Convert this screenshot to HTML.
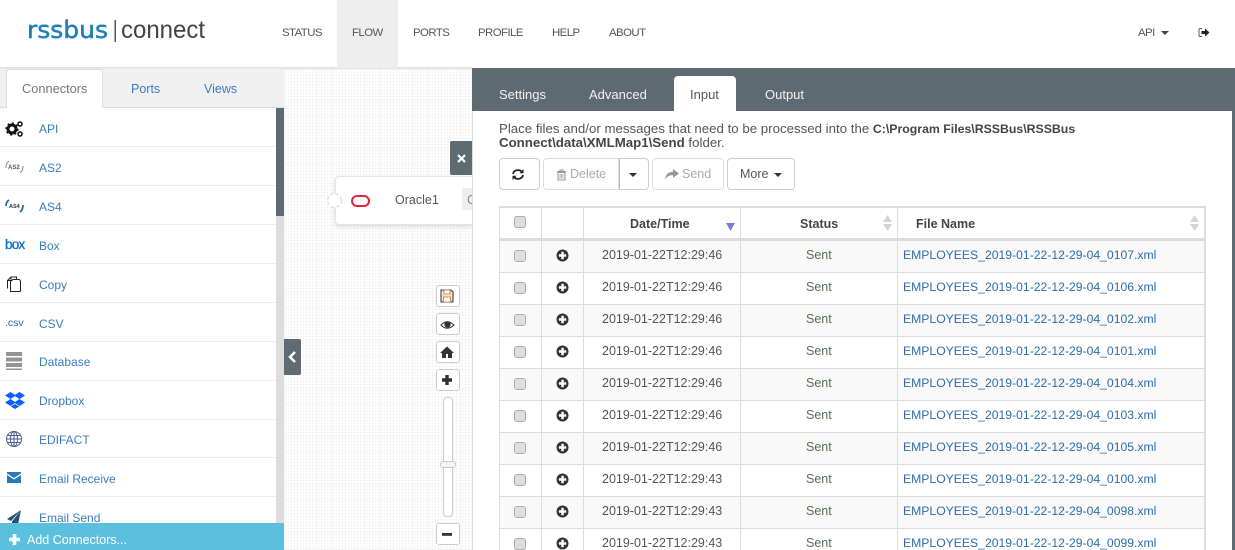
<!DOCTYPE html>
<html><head><meta charset="utf-8"><style>
*{box-sizing:border-box}
html,body{margin:0;padding:0;width:1235px;height:550px;overflow:hidden;background:#fff;font-family:"Liberation Sans",sans-serif;font-size:12.5px;color:#555}
.a,.a>*{position:absolute}
.a{left:0;top:0;width:1235px;height:550px;overflow:hidden}
.t{white-space:nowrap;line-height:14px}
.nav{top:26px;font-size:11.4px;letter-spacing:-.55px;color:#555}
.li{left:39px;color:#3a7dbd;font-size:12px}
.ln{left:0;width:276px;height:1px;background:#eee}
.btn{border:1px solid #ccc;border-radius:4px;background:#fff;height:32px;top:158px}
.dis{color:#aaa}
.r{left:500px;width:705px;height:32px;border-bottom:1px solid #ddd}
.r>*{position:absolute}
.s{background:#f9f9f9}
.c{left:14px;top:9px;width:12px;height:12px;background:#dedede;border:1px solid #aaa;border-radius:3px}
.p{left:56px;top:8px;width:13px;height:13px}
.d{left:102px;top:7px;line-height:14px;white-space:nowrap}
.st{left:306px;top:7px;line-height:14px;color:#4f7050}
.f{left:403px;top:7px;line-height:14px;color:#2d6ca8;font-size:12.2px;white-space:nowrap}
.v{top:206px;height:344px;width:1px;background:#ddd}
.tb{left:436px;width:24px;height:22px;background:#fff;border:1px solid #ccc;border-radius:3px}
.tb svg{position:absolute;left:4px;top:3px}
.h{top:217px;font-weight:bold;color:#444;font-size:12.5px;line-height:14px}
</style></head><body><div class="a">

<!-- canvas -->
<div style="left:284px;top:68px;width:188px;height:482px;background-color:#fff;background-image:linear-gradient(#f7f7f7 1px,transparent 1px),linear-gradient(90deg,#f7f7f7 1px,transparent 1px),radial-gradient(#f1f1f1 .8px,transparent 1px);background-size:16px 16px,16px 16px,3px 3px"></div>

<!-- header -->
<div style="left:0;top:0;width:1235px;height:68px;background:#fff"></div>
<div style="left:0;top:67px;width:472px;height:3px;background:linear-gradient(#ddd,#f4f4f4)"></div>
<div style="left:337px;top:0;width:61px;height:68px;background:#eee"></div>
<svg style="left:20px;top:12px" width="195" height="36">
<text x="7" y="26" font-family="DejaVu Sans" font-size="24" fill="#1f7fb8" stroke="#1f7fb8" stroke-width=".5" textLength="81" lengthAdjust="spacingAndGlyphs">rssbus</text>
<rect x="94.500" y="8" width="1.500" height="22" fill="#555"/>
<text x="101" y="26" font-family="Liberation Sans" font-size="25" fill="#444" textLength="84" lengthAdjust="spacingAndGlyphs">connect</text>
</svg>
<span class="t nav" style="left:282px">STATUS</span>
<span class="t nav" style="left:352px">FLOW</span>
<span class="t nav" style="left:413px">PORTS</span>
<span class="t nav" style="left:478px">PROFILE</span>
<span class="t nav" style="left:552px">HELP</span>
<span class="t nav" style="left:609px">ABOUT</span>
<span class="t nav" style="left:1138px">API</span>
<svg style="left:1160px;top:31px" width="10" height="5"><path d="M1 0h8L5 4z" fill="#444"/></svg>
<svg style="left:1198px;top:27px" width="13" height="12"><path d="M4 1.500H2a1 1 0 0 0-1 1v6a1 1 0 0 0 1 1h2" fill="none" stroke="#555" stroke-width="1"/><path d="M3.500 4h3.500V1.500L11.500 5.500 7 9.500V7H3.500z" fill="#222"/></svg>

<!-- left panel -->
<div style="left:0;top:69px;width:284px;height:39px;background:#f0f0f0;border-bottom:1px solid #ddd"></div>
<div style="left:6px;top:69px;width:97px;height:39px;background:#fff;border:1px solid #ddd;border-bottom:0;border-radius:4px 4px 0 0"></div>
<span class="t" style="left:22px;top:82px;color:#777;font-size:12.8px">Connectors</span>
<span class="t" style="left:131px;top:82px;color:#3a7dbd;font-size:12.500px">Ports</span>
<span class="t" style="left:204px;top:82px;color:#3a7dbd;font-size:12.500px">Views</span>

<div class="ln" style="top:146px"></div><div class="ln" style="top:185px"></div><div class="ln" style="top:224px"></div><div class="ln" style="top:263px"></div><div class="ln" style="top:302px"></div><div class="ln" style="top:341px"></div><div class="ln" style="top:380px"></div><div class="ln" style="top:419px"></div><div class="ln" style="top:457px"></div><div class="ln" style="top:496px"></div>

<span class="t li" style="top:122px">API</span>
<span class="t li" style="top:161px">AS2</span>
<span class="t li" style="top:200px">AS4</span>
<span class="t li" style="top:239px">Box</span>
<span class="t li" style="top:278px">Copy</span>
<span class="t li" style="top:317px">CSV</span>
<span class="t li" style="top:355px">Database</span>
<span class="t li" style="top:394px">Dropbox</span>
<span class="t li" style="top:433px">EDIFACT</span>
<span class="t li" style="top:472px">Email Receive</span>
<span class="t li" style="top:511px">Email Send</span>

<!-- list icons -->
<svg style="left:5px;top:120px" width="19" height="18"><circle cx="7" cy="9" r="4" fill="none" stroke="#111" stroke-width="3"/><circle cx="7" cy="9" r="5.800" fill="none" stroke="#111" stroke-width="1.600" stroke-dasharray="2 2.500"/><circle cx="15" cy="4" r="2" fill="none" stroke="#111" stroke-width="1.500"/><circle cx="15" cy="14" r="2" fill="none" stroke="#111" stroke-width="1.500"/></svg>
<svg style="left:5px;top:158px" width="19" height="18"><text x="3" y="11" font-family="Liberation Sans" font-size="6" font-weight="bold" fill="#556">AS2</text><path d="M1 10Q1 5 4 3M18 8q0 5-3 7" fill="none" stroke="#68a" stroke-width="1"/></svg>
<svg style="left:5px;top:197px" width="19" height="18"><text x="4" y="11" font-family="Liberation Sans" font-size="5.500" font-weight="bold" fill="#333">AS4</text><path d="M1 9Q1 5 4 3M18 8q0 5-3 7" fill="none" stroke="#1f6fb5" stroke-width="1.800"/></svg>
<span class="t" style="left:5px;top:238px;font-size:13.5px;letter-spacing:-.8px;color:#0a6fc0;-webkit-text-stroke:.3px #0a6fc0">box</span>
<svg style="left:6px;top:276px" width="16" height="17" fill="none" stroke="#222" stroke-width="1"><path d="M1.500 12.500V4.500L5 1h5.500v2.500"/><path d="M5 1v3.500H1.500"/><path d="M4.500 15.500V5.500L7 3.500h5a2 2 0 0 1 2.500 2v9a1 1 0 0 1-1 1z" fill="#fff"/></svg>
<span class="t" style="left:5px;top:316px;font-size:10.500px;color:#1f6fb5">.csv</span>
<svg style="left:6px;top:352px" width="16" height="18"><path d="M0 0h16v4H0zM0 5.500h16v4H0zM0 11h16v4H0zM0 16.500h16V18H0z" fill="#949494"/></svg>
<svg style="left:5px;top:391px" width="20" height="18"><path d="M5.500 1 0 4.500 5.500 8 11 4.500zM14.500 1 9 4.500 14.500 8 20 4.500zM5.500 8 0 11.500 5.500 15 10 12 14.500 15 20 11.500 14.500 8 10 11zM5.800 15.500 10 18l4.200-2.500L10 13z" fill="#0a60ff"/></svg>
<svg style="left:6px;top:431px" width="16" height="16" fill="none" stroke="#4a5f8c" stroke-width="1"><circle cx="8" cy="8" r="7.500"/><ellipse cx="8" cy="8" rx="3.500" ry="7.500"/><path d="M8 .500v15M.500 8h15M1.500 4.500h13M1.500 11.500h13"/></svg>
<svg style="left:7px;top:472px" width="14" height="11"><path d="M0 0h14v1.500L7 6 0 1.500z" fill="#2a7ab8"/><path d="M0 3 7 7.500 14 3v8H0z" fill="#2a7ab8"/></svg>
<svg style="left:7px;top:510px" width="15" height="16"><path d="M14 0 0 9l4 2zM14 0 5 11.500V16l2.500-3 3.500 1.500z" fill="#24527e"/></svg>

<div style="left:276px;top:108px;width:8px;height:415px;background:#ddd"></div>
<div style="left:276px;top:108px;width:8px;height:108px;background:#5f6b73"></div>
<div style="left:0;top:523px;width:284px;height:27px;background:#5bc0de"></div>
<svg style="left:9px;top:534px" width="11" height="11"><path d="M3.700 0h3.600v3.700H11v3.600H7.300V11H3.700V7.300H0V3.700h3.700z" fill="#fff"/></svg>
<span class="t" style="left:27px;top:533px;color:#fff;font-size:12.500px">Add Connectors...</span>

<!-- collapse -->
<div style="left:284px;top:339px;width:17px;height:36px;background:#5f6b73;border-radius:0 2px 2px 0"></div>
<svg style="left:288px;top:351px" width="9" height="12"><path d="M7 1 2 6l5 5" fill="none" stroke="#fff" stroke-width="2.500"/></svg>

<!-- node -->
<div style="left:450px;top:141px;width:22px;height:34px;background:#5f6b73;border-radius:2px 0 0 2px"></div>
<svg style="left:457px;top:154px" width="9" height="9"><path d="M1 1l7 7M8 1 1 8" stroke="#fff" stroke-width="2.200"/></svg>
<div style="left:335px;top:176px;width:137px;height:49px;background:#fff;border:1px solid #e4e4e4;border-right:0;border-radius:4px 0 0 4px;box-shadow:0 2px 4px rgba(0,0,0,.12)"></div>
<svg style="left:326px;top:192px" width="17" height="17"><circle cx="8.500" cy="8.500" r="6.800" fill="#fff" stroke="#d6d6d6" stroke-width="1.200" stroke-dasharray="3 2.500"/></svg>
<div style="left:351px;top:195px;width:19px;height:12px;border:2px solid #e8223a;border-radius:6px"></div>
<span class="t" style="left:395px;top:193px;color:#555;font-size:12.500px">Oracle1</span>
<div style="left:462px;top:188px;width:10px;height:22px;background:#eee;border-radius:2px 0 0 2px"></div>
<span class="t" style="left:467px;top:193px;color:#888;font-size:12.500px;width:5px;overflow:hidden">C</span>

<!-- canvas tools -->
<div class="tb" style="top:285px"><svg style="left:3px" width="14" height="14"><path d="M1 1h10l2 2v10H1z" fill="#f4e3c8" stroke="#333" stroke-width="1"/><path d="M4 1h6v4H4zM3.500 8h7v5h-7z" fill="#fff" stroke="#c07a30" stroke-width=".8"/></svg></div>
<div class="tb" style="top:313px"><svg style="left:3px;top:4px" width="15" height="14"><path d="M1 7q6-6.500 13 0-7 6.500-13 0z" fill="#fff" stroke="#333"/><circle cx="7.500" cy="6.500" r="3.200" fill="#333"/></svg></div>
<div class="tb" style="top:341px"><svg style="left:3px" width="14" height="14"><path d="M7 1.500 0 8h2v5h4V9h2v4h4V8h2z" fill="#333"/></svg></div>
<div class="tb" style="top:369px"><svg style="left:3px" width="14" height="14"><path d="M5.300 2h3.400v3.300H12v3.400H8.700V12H5.300V8.700H2V5.300h3.300z" fill="#333"/></svg></div>
<div style="left:443px;top:397px;width:10px;height:120px;background:#fff;border:1px solid #ccc;border-radius:4px"></div>
<div style="left:440px;top:461px;width:16px;height:7px;background:#f4f4f4;border:1px solid #ccc;border-radius:3px"></div>
<div class="tb" style="top:523px"><svg style="left:3px" width="14" height="14"><path d="M2 6h10v2.800H2z" fill="#333"/></svg></div>

<!-- right panel -->
<div style="left:472px;top:68px;width:763px;height:482px;background:#fff;border-left:1px solid #ddd"></div>
<div style="left:472px;top:68px;width:763px;height:43px;background:#5e6a72"></div>
<div style="left:674px;top:76px;width:62px;height:35px;background:#fff;border-radius:4px 4px 0 0"></div>
<span class="t" style="left:499px;top:88px;color:#f2f2f2;font-size:13px">Settings</span>
<span class="t" style="left:589px;top:88px;color:#f2f2f2;font-size:13px">Advanced</span>
<span class="t" style="left:690px;top:88px;color:#555;font-size:13px">Input</span>
<span class="t" style="left:765px;top:88px;color:#f2f2f2;font-size:13px">Output</span>
<div style="left:1232px;top:111px;width:3px;height:439px;background:#5e6a72"></div>

<span class="t" style="left:499px;top:122px;font-size:13.27px;color:#555">Place files and/or messages that need to be processed into the <b style="color:#444;font-size:12.3px">C:\Program Files\RSSBus\RSSBus</b></span>
<span class="t" style="left:499px;top:136px;font-size:13.27px;color:#555"><b style="color:#444">Connect\data\XMLMap1\Send</b> folder.</span>

<!-- buttons -->
<div class="btn" style="left:499px;width:41px"></div>
<svg style="left:511px;top:168px" width="14" height="13" fill="none" stroke="#222" stroke-width="1.800"><path d="M2 6a5 4.500 0 0 1 9-2"/><path d="M12 7a5 4.500 0 0 1-9 2"/><path d="M12.500 1v4.200H8.500z" fill="#222" stroke="none"/><path d="M1.500 12V7.800h4z" fill="#222" stroke="none"/></svg>
<div class="btn" style="left:543px;width:76px;border-radius:4px 0 0 4px;border-color:#ddd"></div>
<div class="btn" style="left:619px;width:30px;border-radius:0 4px 4px 0;border-left-color:#bbb"></div>
<svg style="left:556px;top:169px" width="11" height="12"><path d="M1 2.500h9M4 2.500V1h3v1.500M2 3.500h7V11H2z" fill="none" stroke="#999" stroke-width="1.100"/><path d="M4 5v4.500M5.500 5v4.500M7 5v4.500" stroke="#999" stroke-width=".8"/></svg>
<span class="t dis" style="left:570px;top:167px;font-size:12.500px">Delete</span>
<svg style="left:628px;top:173px" width="10" height="5"><path d="M1 0h8L5 4z" fill="#333"/></svg>
<div class="btn" style="left:652px;width:72px;border-color:#ddd"></div>
<svg style="left:665px;top:169px" width="14" height="12"><path d="M8 0l6 4.500L8 9V6.300C4.500 6.300 2 7 .5 11 0 6 3 3 8 2.800z" fill="#999"/></svg>
<span class="t dis" style="left:682px;top:167px;font-size:12.500px">Send</span>
<div class="btn" style="left:727px;width:68px"></div>
<span class="t" style="left:740px;top:167px;font-size:12.500px">More</span>
<svg style="left:773px;top:173px" width="10" height="5"><path d="M1 0h8L5 4z" fill="#333"/></svg>

<!-- table -->
<div style="left:499px;top:206px;width:707px;height:2px;background:#ddd"></div>
<div style="left:499px;top:238px;width:707px;height:3px;background:#ddd"></div>
<div class="c" style="left:514px;top:216px;position:absolute"></div>
<span class="t h" style="left:630px">Date/Time</span>
<span class="t h" style="left:800px">Status</span>
<span class="t h" style="left:916px">File Name</span>
<svg style="left:726px;top:223px" width="9" height="8"><path d="M0 0h9L4.500 8z" fill="#7b7fd0"/></svg>
<svg style="left:883px;top:214px" width="9" height="17"><path d="M4.500 1 9 8H0zM0 10h9l-4.500 7z" fill="#d4d4d4"/></svg>
<svg style="left:1190px;top:214px" width="9" height="17"><path d="M4.500 1 9 8H0zM0 10h9l-4.500 7z" fill="#d4d4d4"/></svg>

<div class="r s" style="top:241px;height:32px"><i class="c"></i><svg class="p" viewBox="0 0 13 13"><circle cx="6.500" cy="6.500" r="6" fill="#333"/><path d="M5.300 2.800h2.400v2.500h2.500v2.400H7.700v2.500H5.300V7.700H2.800V5.300h2.500z" fill="#fff"/></svg><span class="d">2019-01-22T12:29:46</span><span class="st">Sent</span><span class="f">EMPLOYEES_2019-01-22-12-29-04_0107.xml</span></div>
<div class="r" style="top:273px"><i class="c"></i><svg class="p" viewBox="0 0 13 13"><circle cx="6.500" cy="6.500" r="6" fill="#333"/><path d="M5.300 2.800h2.400v2.500h2.500v2.400H7.700v2.500H5.300V7.700H2.800V5.300h2.500z" fill="#fff"/></svg><span class="d">2019-01-22T12:29:46</span><span class="st">Sent</span><span class="f">EMPLOYEES_2019-01-22-12-29-04_0106.xml</span></div>
<div class="r s" style="top:305px"><i class="c"></i><svg class="p" viewBox="0 0 13 13"><circle cx="6.500" cy="6.500" r="6" fill="#333"/><path d="M5.300 2.800h2.400v2.500h2.500v2.400H7.700v2.500H5.300V7.700H2.800V5.300h2.500z" fill="#fff"/></svg><span class="d">2019-01-22T12:29:46</span><span class="st">Sent</span><span class="f">EMPLOYEES_2019-01-22-12-29-04_0102.xml</span></div>
<div class="r" style="top:337px"><i class="c"></i><svg class="p" viewBox="0 0 13 13"><circle cx="6.500" cy="6.500" r="6" fill="#333"/><path d="M5.300 2.800h2.400v2.500h2.500v2.400H7.700v2.500H5.300V7.700H2.800V5.300h2.500z" fill="#fff"/></svg><span class="d">2019-01-22T12:29:46</span><span class="st">Sent</span><span class="f">EMPLOYEES_2019-01-22-12-29-04_0101.xml</span></div>
<div class="r s" style="top:369px"><i class="c"></i><svg class="p" viewBox="0 0 13 13"><circle cx="6.500" cy="6.500" r="6" fill="#333"/><path d="M5.300 2.800h2.400v2.500h2.500v2.400H7.700v2.500H5.300V7.700H2.800V5.300h2.500z" fill="#fff"/></svg><span class="d">2019-01-22T12:29:46</span><span class="st">Sent</span><span class="f">EMPLOYEES_2019-01-22-12-29-04_0104.xml</span></div>
<div class="r" style="top:401px"><i class="c"></i><svg class="p" viewBox="0 0 13 13"><circle cx="6.500" cy="6.500" r="6" fill="#333"/><path d="M5.300 2.800h2.400v2.500h2.500v2.400H7.700v2.500H5.300V7.700H2.800V5.300h2.500z" fill="#fff"/></svg><span class="d">2019-01-22T12:29:46</span><span class="st">Sent</span><span class="f">EMPLOYEES_2019-01-22-12-29-04_0103.xml</span></div>
<div class="r s" style="top:433px"><i class="c"></i><svg class="p" viewBox="0 0 13 13"><circle cx="6.500" cy="6.500" r="6" fill="#333"/><path d="M5.300 2.800h2.400v2.500h2.500v2.400H7.700v2.500H5.300V7.700H2.800V5.300h2.500z" fill="#fff"/></svg><span class="d">2019-01-22T12:29:46</span><span class="st">Sent</span><span class="f">EMPLOYEES_2019-01-22-12-29-04_0105.xml</span></div>
<div class="r" style="top:465px"><i class="c"></i><svg class="p" viewBox="0 0 13 13"><circle cx="6.500" cy="6.500" r="6" fill="#333"/><path d="M5.300 2.800h2.400v2.500h2.500v2.400H7.700v2.500H5.300V7.700H2.800V5.300h2.500z" fill="#fff"/></svg><span class="d">2019-01-22T12:29:43</span><span class="st">Sent</span><span class="f">EMPLOYEES_2019-01-22-12-29-04_0100.xml</span></div>
<div class="r s" style="top:497px"><i class="c"></i><svg class="p" viewBox="0 0 13 13"><circle cx="6.500" cy="6.500" r="6" fill="#333"/><path d="M5.300 2.800h2.400v2.500h2.500v2.400H7.700v2.500H5.300V7.700H2.800V5.300h2.500z" fill="#fff"/></svg><span class="d">2019-01-22T12:29:43</span><span class="st">Sent</span><span class="f">EMPLOYEES_2019-01-22-12-29-04_0098.xml</span></div>
<div class="r" style="top:529px"><i class="c"></i><svg class="p" viewBox="0 0 13 13"><circle cx="6.500" cy="6.500" r="6" fill="#333"/><path d="M5.300 2.800h2.400v2.500h2.500v2.400H7.700v2.500H5.300V7.700H2.800V5.300h2.500z" fill="#fff"/></svg><span class="d">2019-01-22T12:29:43</span><span class="st">Sent</span><span class="f">EMPLOYEES_2019-01-22-12-29-04_0099.xml</span></div>

<div class="v" style="left:499px"></div>
<div class="v" style="left:541px"></div>
<div class="v" style="left:583px"></div>
<div class="v" style="left:740px"></div>
<div class="v" style="left:897px"></div>
<div class="v" style="left:1204px;width:2px"></div>
</div></body></html>
